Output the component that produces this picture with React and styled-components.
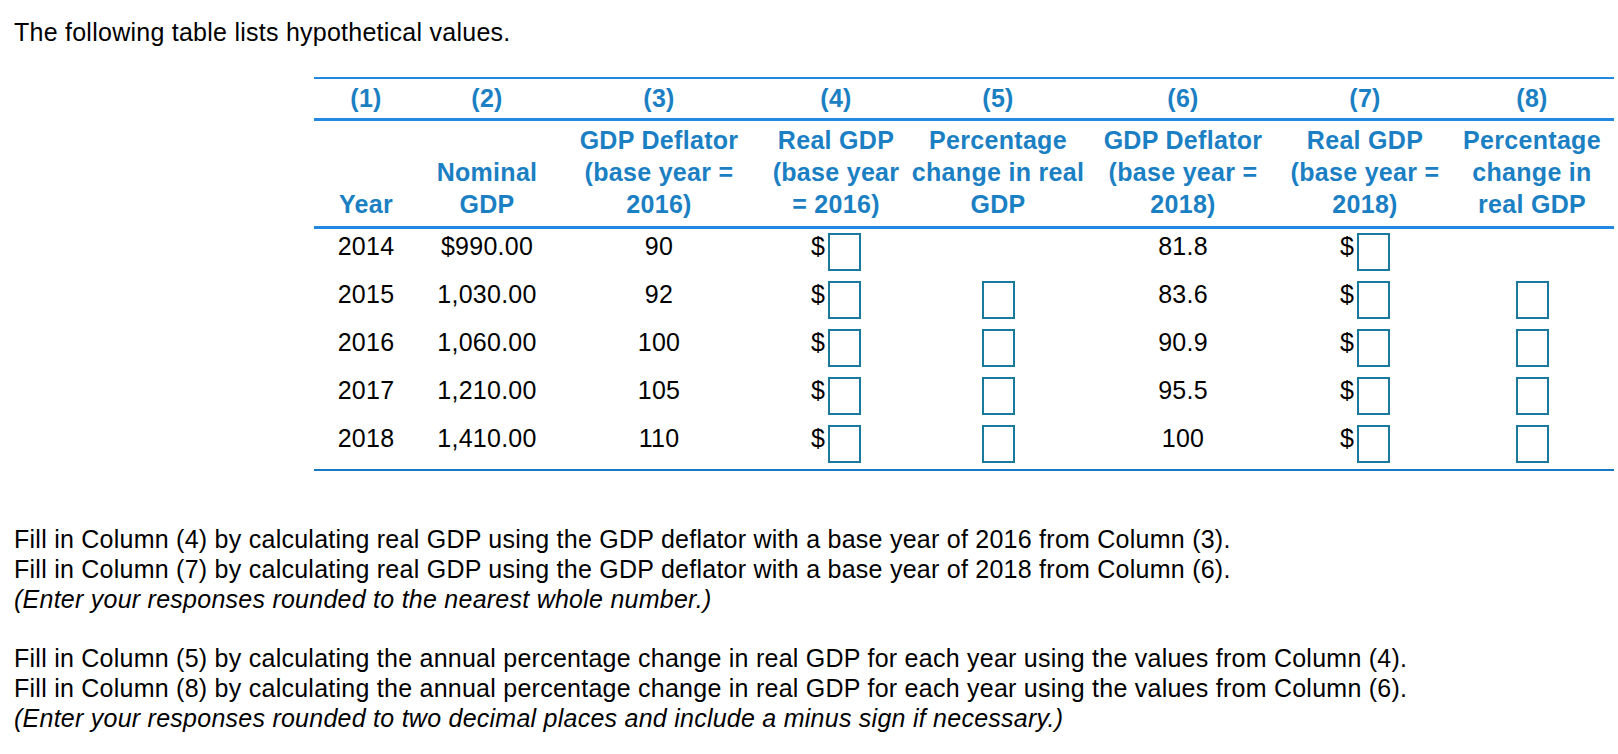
import styled, { createGlobalStyle } from "styled-components";

const GlobalStyle = createGlobalStyle`
  body {
    margin: 0;
    background: #ffffff;
    color: #000000;
    font-family: "Liberation Sans", Arial, Helvetica, sans-serif;
  }
`;

const COLS = "104px 138px 206px 148px 176px 194px 170px 164px";

const rows = [
  { year: "2014", nominal: "$990.00", def16: "90", def18: "81.8", first: true },
  { year: "2015", nominal: "1,030.00", def16: "92", def18: "83.6" },
  { year: "2016", nominal: "1,060.00", def16: "100", def18: "90.9" },
  { year: "2017", nominal: "1,210.00", def16: "105", def18: "95.5" },
  { year: "2018", nominal: "1,410.00", def16: "110", def18: "100" },
];

const headings = [
  ["Year"],
  ["Nominal", "GDP"],
  ["GDP Deflator", "(base year =", "2016)"],
  ["Real GDP", "(base year", "= 2016)"],
  ["Percentage", "change in real", "GDP"],
  ["GDP Deflator", "(base year =", "2018)"],
  ["Real GDP", "(base year =", "2018)"],
  ["Percentage", "change in", "real GDP"],
];

const AnswerBox = ({ dollar }) => (
  <BoxCell>
    {dollar && <Dollar>$</Dollar>}
    <Box type="text" aria-label="answer" />
  </BoxCell>
);

const App = () => {
  return (
    <Page>
      <GlobalStyle />
      <Intro>The following table lists hypothetical values.</Intro>

      <Table>
        <Row $rule="3px">
          {headings.map((_, i) => (
            <NumberCell key={i}>({i + 1})</NumberCell>
          ))}
        </Row>
        <Row $rule="3px">
          {headings.map((lines, i) => (
            <HeadCell key={i}>
              {lines.map((l, j) => (
                <div key={j}>{l}</div>
              ))}
            </HeadCell>
          ))}
        </Row>
        {rows.map((r) => (
          <Row key={r.year} $data>
            <Cell>{r.year}</Cell>
            <Cell>{r.nominal}</Cell>
            <Cell>{r.def16}</Cell>
            <AnswerBox dollar />
            {r.first ? <Cell /> : <AnswerBox />}
            <Cell>{r.def18}</Cell>
            <AnswerBox dollar />
            {r.first ? <Cell /> : <AnswerBox />}
          </Row>
        ))}
      </Table>

      <Notes>
        <Text>
          Fill in Column (4) by calculating real GDP using the GDP deflator with a base year of 2016 from Column (3).
        </Text>
        <Text>
          Fill in Column (7) by calculating real GDP using the GDP deflator with a base year of 2018 from Column (6).
        </Text>
        <Text $italic>(Enter your responses rounded to the nearest whole number.)</Text>
      </Notes>
      <Notes>
        <Text>
          Fill in Column (5) by calculating the annual percentage change in real GDP for each year using the values from Column (4).
        </Text>
        <Text>
          Fill in Column (8) by calculating the annual percentage change in real GDP for each year using the values from Column (6).
        </Text>
        <Text $italic>
          (Enter your responses rounded to two decimal places and include a minus sign if necessary.)
        </Text>
      </Notes>
    </Page>
  );
};

const Page = styled.div`
  padding: 18px 0 20px 14px;
  font-size: 25px;
  letter-spacing: 0.25px;
`;

const Text = styled.div`
  line-height: 30px;
  white-space: nowrap;
  font-style: ${(p) => (p.$italic ? "italic" : "normal")};
`;

const Intro = styled(Text)`
  line-height: 28.5px;
`;

const Table = styled.div`
  margin: 30px 0 0 300px;
  width: 1300px;
  border-top: 2px solid #2288e2;
  border-bottom: 2px solid #1b7bc2;
`;

const Row = styled.div`
  display: grid;
  grid-template-columns: ${COLS};
  height: ${(p) => (p.$data ? "48px" : "auto")};
  border-bottom: ${(p) => (p.$rule ? `${p.$rule} solid #2288e2` : "none")};
`;

const NumberCell = styled.div`
  height: 39px;
  display: flex;
  align-items: center;
  justify-content: center;
  font-weight: bold;
  color: #1b80c3;
  letter-spacing: 0.3px;
`;

const HeadCell = styled.div`
  display: flex;
  flex-direction: column;
  justify-content: flex-end;
  align-items: center;
  text-align: center;
  padding: 3px 0 6px;
  line-height: 32px;
  font-weight: bold;
  color: #1b80c3;
  letter-spacing: 0.3px;
  white-space: nowrap;
  min-height: 96px;
`;

const Cell = styled.div`
  text-align: center;
  padding-top: 1px;
  line-height: 32px;
`;

const BoxCell = styled.div`
  display: flex;
  justify-content: center;
  align-items: flex-start;
`;

const Dollar = styled.span`
  line-height: 32px;
  padding-top: 1px;
  margin-right: 3px;
`;

const Box = styled.input`
  box-sizing: border-box;
  width: 33px;
  height: 38px;
  margin: 4px 0 0;
  padding: 0;
  border: 2px solid #1a7a9e;
  border-radius: 0;
  background: #ffffff;
  outline: none;
`;

const Notes = styled.div`
  margin-top: 53px;

  & + & {
    margin-top: 29px;
  }
`;

export default App;
